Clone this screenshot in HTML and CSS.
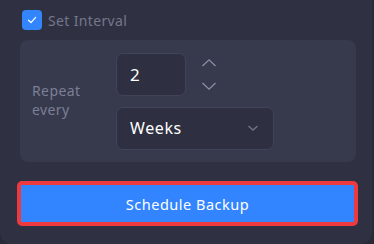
FILE: index.html
```html
<!DOCTYPE html>
<html>
<head>
<meta charset="utf-8">
<link rel="stylesheet" href="styles.css">
</head>
<body>
<div class="card">
  <label class="check-row">
    <span class="checkbox">
      <svg width="12" height="12" viewBox="0 0 12 12"><path d="M2.5 6.3 L5 8.6 L9.6 3.4" fill="none" stroke="#fff" stroke-width="1.3" stroke-linecap="round" stroke-linejoin="round"/></svg>
    </span>
    <span class="check-label">Set Interval</span>
  </label>
  <div class="panel">
    <div class="repeat-label">Repeat<br>every</div>
    <div class="controls">
      <div class="num-row">
        <div class="num-input">2</div>
        <div class="spin">
          <svg width="16" height="10" viewBox="0 0 16 10"><path d="M1.5 8 L8 1.8 L14.5 8" fill="none" stroke="#8a8ea6" stroke-width="1.3"/></svg>
          <svg width="16" height="10" viewBox="0 0 16 10"><path d="M1.5 2 L8 8.2 L14.5 2" fill="none" stroke="#8a8ea6" stroke-width="1.3"/></svg>
        </div>
      </div>
      <div class="select">
        <span class="select-value">Weeks</span>
        <svg width="12" height="8" viewBox="0 0 12 8"><path d="M1.5 2 L6 6 L10.5 2" fill="none" stroke="#6f7389" stroke-width="1.4"/></svg>
      </div>
    </div>
  </div>
  <div class="btn-wrap">
    <button class="btn">Schedule Backup</button>
  </div>
</div>
</body>
</html>
```
FILE: styles.css
```css
html, body {
  margin: 0;
  padding: 0;
  background: #292a37;
  width: 374px;
  height: 244px;
  overflow: hidden;
}
body {
  font-family: "Noto Sans", "Open Sans", sans-serif;
}
.card {
  width: 372px;
  height: 244px;
  box-sizing: border-box;
  background: #2f3142;
  border-radius: 0 0 12px 12px;
  padding: 10px 0 0 0;
}
.check-row {
  display: flex;
  align-items: center;
  margin-left: 22px;
  height: 20px;
}
.checkbox {
  width: 20px;
  height: 20px;
  border-radius: 4px;
  background: #3385ff;
  display: flex;
  align-items: center;
  justify-content: center;
}
.check-label {
  margin-left: 6px;
  font-size: 14px;
  color: #74778c;
  letter-spacing: 0.35px;
}
.panel {
  margin: 10px 0 0 20px;
  width: 336px;
  height: 122px;
  box-sizing: border-box;
  background: #373a4d;
  border-radius: 8px;
  display: flex;
  align-items: center;
  padding: 0 0 0 12px;
}
.repeat-label {
  width: 84px;
  font-size: 14px;
  line-height: 19px;
  color: #7c7f95;
  letter-spacing: 0.4px;
  margin-top: -2px;
}
.controls {
  display: flex;
  flex-direction: column;
  gap: 11px;
}
.num-row {
  display: flex;
  align-items: center;
  gap: 15px;
}
.num-input {
  width: 70px;
  height: 43px;
  box-sizing: border-box;
  border: 1.5px solid #414459;
  border-radius: 7px;
  background: #2e3041;
  color: #ffffff;
  font-size: 17px;
  display: flex;
  align-items: center;
  padding-left: 13px;
}
.spin {
  display: flex;
  flex-direction: column;
  gap: 13px;
}
.select {
  width: 158px;
  height: 43px;
  box-sizing: border-box;
  border: 1.5px solid #414459;
  border-radius: 7px;
  background: #2e3041;
  display: flex;
  align-items: center;
  justify-content: space-between;
  padding: 0 14px 0 13px;
}
.select-value {
  color: #ffffff;
  font-size: 16px;
  font-weight: 400;
  letter-spacing: 0.6px;
}
.btn-wrap {
  margin: 19px 0 0 17px;
  width: 341px;
}
.btn {
  width: 341px;
  height: 45px;
  box-sizing: border-box;
  border: 4px solid #ee3a3f;
  border-radius: 5px;
  background: #3385ff;
  color: #ffffff;
  font-family: "Noto Sans", "Open Sans", sans-serif;
  font-size: 14.5px;
  font-weight: 400;
  letter-spacing: 0.5px;
  padding: 0;
}
```
